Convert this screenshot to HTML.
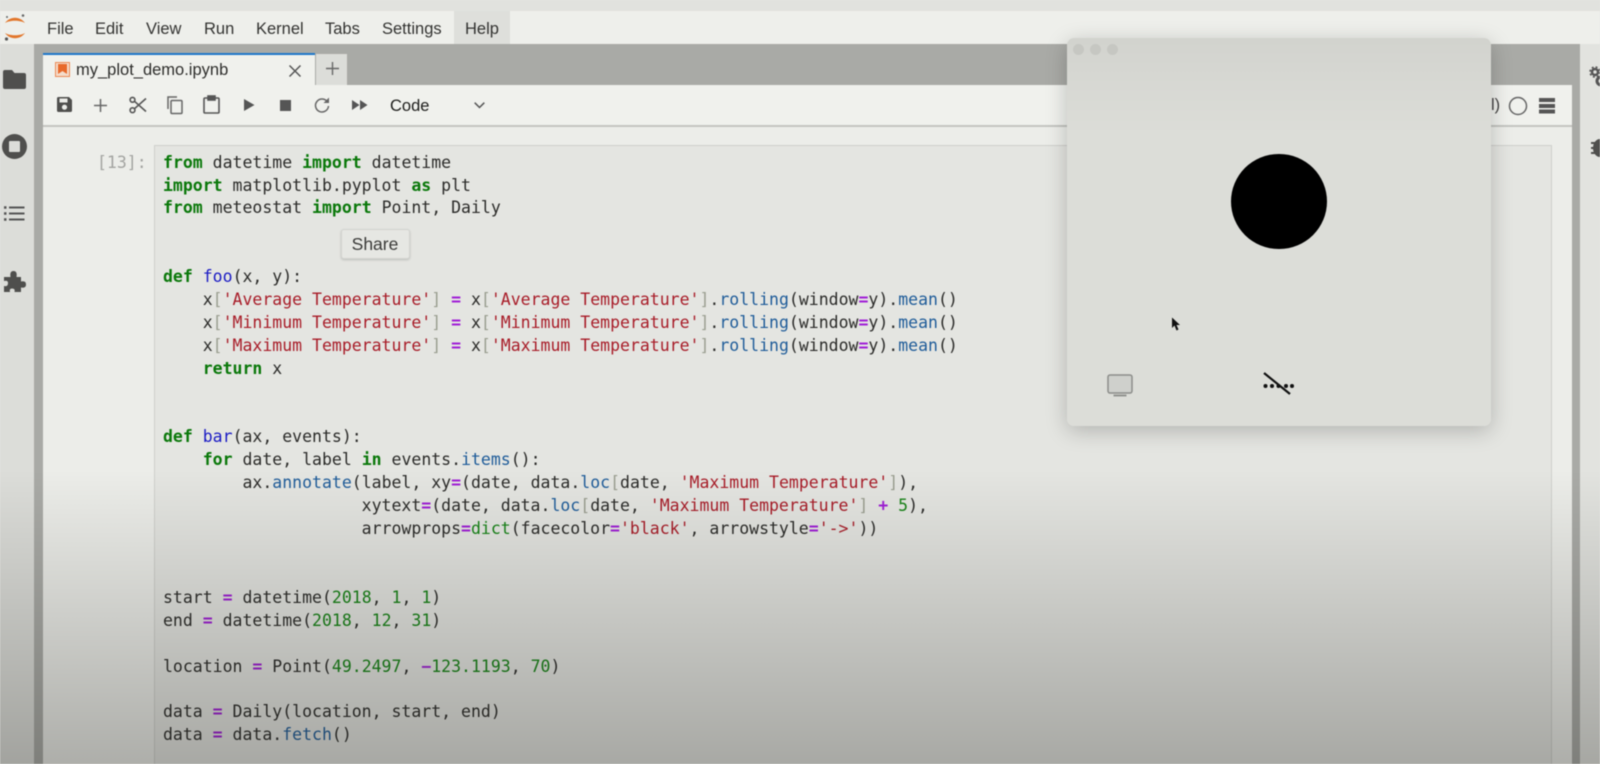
<!DOCTYPE html>
<html><head><meta charset="utf-8"><title>my_plot_demo.ipynb</title>
<style>
html,body{margin:0;padding:0;width:1600px;height:764px;overflow:hidden;background:#e6e7e3}
#root{position:absolute;left:0;top:0;width:1600px;height:764px;overflow:hidden;font-family:"Liberation Sans",sans-serif;filter:blur(.4px)}
.a{position:absolute}
.m{position:absolute;top:19px;font-size:16.5px;line-height:21px;color:#333331}
#code{position:absolute;left:163px;top:151.6px;margin:0;font:16.5px/22.9px "DejaVu Sans Mono",monospace;color:#2b2b29;white-space:pre}
.k{color:#0a780a;font-weight:bold}.o{color:#a01fd6;font-weight:bold}.s{color:#a81c28}.n{color:#178317}.f{color:#1f5c99}.d{color:#1a1ac4}.b{color:#9a9e90}.g{color:#178317}
svg{position:absolute;overflow:visible}
</style></head><body><div id="root">
<div class="a" style="left:0;top:0;width:1600px;height:11px;background:#e1e2de"></div>
<div class="a" style="left:0;top:11px;width:1600px;height:33px;background:#eeefeb"></div>
<div class="a" style="left:454px;top:11px;width:56px;height:33px;background:#dedfdb"></div>
<svg style="left:3px;top:13px" width="24" height="30" viewBox="0 0 24 30"><path d="M2 10C7 3 17 3 22 10C17 7 7 7 2 10Z" fill="#e2762b"/><path d="M2 20C7 27 17 27 22 20C17 23 7 23 2 20Z" fill="#e2762b"/><circle cx="20" cy="2.500" r="1.300" fill="#666"/><circle cx="4" cy="4" r="1" fill="#666"/><circle cx="3.500" cy="26" r="1.600" fill="#555"/></svg>
<span class="m" style="left:47px">File</span><span class="m" style="left:95px">Edit</span><span class="m" style="left:146px">View</span><span class="m" style="left:204px">Run</span><span class="m" style="left:256px">Kernel</span><span class="m" style="left:325px">Tabs</span><span class="m" style="left:382px">Settings</span><span class="m" style="left:465px">Help</span>

<div class="a" style="left:0;top:44px;width:34px;height:720px;background:#dcddd9"></div>
<div class="a" style="left:34px;top:44px;width:1546px;height:720px;background:#a9aaa6"></div>
<div class="a" style="left:1580px;top:44px;width:20px;height:720px;background:#e2e3df"></div>
<div class="a" style="left:43px;top:85px;width:1529px;height:679px;background:#ecede9"></div>

<div class="a" style="left:43px;top:53px;width:272px;height:32px;background:#f0f1ed;border-top:2px solid #1f77c9;box-sizing:border-box"></div>
<div class="a" style="left:316px;top:54px;width:31px;height:31px;background:#dcddd9"></div>
<div class="a" style="left:55px;top:62px;width:15px;height:15px;background:#f4dccb;box-sizing:border-box;border:1.5px solid #ec8a55"></div>
<svg style="left:58px;top:64px" width="9" height="10"><path d="M0 0H9V10L4.500 7L0 10Z" fill="#e8692a"/></svg>
<span class="a" style="left:76px;top:60px;font-size:16.5px;line-height:21px;color:#2e2e2c">my_plot_demo.ipynb</span>
<svg style="left:288px;top:64px" width="14" height="14"><path d="M1.5 1.5L12.5 12.5M12.5 1.5L1.5 12.5" stroke="#555" stroke-width="1.5"/></svg>
<svg style="left:326px;top:62px" width="13" height="13"><path d="M6.5 0V13M0 6.5H13" stroke="#666" stroke-width="1.4"/></svg>

<div class="a" style="left:43px;top:85px;width:1529px;height:40px;background:#f0f1ed;border-bottom:2px solid #c4c5c1"></div>
<svg style="left:56px;top:96px" width="17" height="17" viewBox="0 0 17 17"><path d="M1 2.500Q1 1 2.500 1H13L16 4V14.500Q16 16 14.500 16H2.500Q1 16 1 14.500Z" fill="#4f4f4d"/><rect x="3.500" y="2.500" width="8" height="4" fill="#ecede9"/><circle cx="8.500" cy="11.200" r="2.600" fill="#ecede9"/></svg>
<svg style="left:94px;top:99px" width="13" height="13"><path d="M6.500 0V13M0 6.500H13" stroke="#666" stroke-width="1.500"/></svg>
<svg style="left:129px;top:96px" width="18" height="18" viewBox="0 0 18 18" fill="none" stroke="#555" stroke-width="1.600"><circle cx="3.500" cy="3.800" r="2.400"/><circle cx="3.500" cy="14.200" r="2.400"/><path d="M5.500 5.300L17 15.500M5.500 12.700L17 2.500"/></svg>
<svg style="left:166px;top:96px" width="17" height="18" viewBox="0 0 17 18" fill="none" stroke="#666" stroke-width="1.500"><path d="M11 1H2V13"/><rect x="5" y="4.500" width="11" height="13" rx="1"/></svg>
<svg style="left:203px;top:95px" width="17" height="19" viewBox="0 0 17 19" fill="none" stroke="#555" stroke-width="1.600"><rect x="1" y="3" width="15" height="15" rx="1"/><rect x="5" y="1" width="7" height="4" fill="#555"/></svg>
<svg style="left:244px;top:99px" width="11" height="12"><path d="M0 0L10.500 6L0 12Z" fill="#555"/></svg>
<div class="a" style="left:280px;top:100px;width:10.500px;height:10.500px;background:#555"></div>
<svg style="left:314px;top:97px" width="16" height="16" viewBox="0 0 16 16" fill="none"><path d="M13.500 5A6.500 6.500 0 1 0 14.500 9" stroke="#666" stroke-width="1.500"/><path d="M15 0.500V6H9.500Z" fill="#666"/></svg>
<svg style="left:352px;top:100px" width="16" height="10"><path d="M0 0L7.500 5L0 10ZM8 0L15.500 5L8 10Z" fill="#555"/></svg>
<span class="a" style="left:390px;top:96px;font-size:16.500px;line-height:21px;color:#1e1e1c">Code</span>
<svg style="left:474px;top:102px" width="11" height="7"><path d="M.7 .7L5.500 5.500L10.300 .7" fill="none" stroke="#555" stroke-width="1.500"/></svg>
<span class="a" style="left:1491px;top:95px;font-size:16.500px;line-height:21px;color:#444">l)</span>
<svg style="left:1508px;top:96px" width="20" height="20"><circle cx="10" cy="10" r="8.500" fill="none" stroke="#666" stroke-width="1.500"/></svg>
<div class="a" style="left:1539px;top:98px;width:16px;height:3.500px;background:#555;box-shadow:0 6px 0 #555,0 11.500px 0 #555"></div>

<div class="a" style="left:154px;top:145px;width:1398px;height:640px;background:#e4e5e1;border:1px solid #cfd0cc;box-sizing:border-box"></div>
<span class="a" style="left:97px;top:151.6px;font:16.500px/22.900px 'DejaVu Sans Mono',monospace;color:#a3a4a1">[13]:</span>

<pre id="code"><span class="k">from</span> datetime <span class="k">import</span> datetime
<span class="k">import</span> matplotlib.pyplot <span class="k">as</span> plt
<span class="k">from</span> meteostat <span class="k">import</span> Point, Daily


<span class="k">def</span> <span class="d">foo</span>(x, y):
    x<span class="b">[</span><span class="s">'Average Temperature'</span><span class="b">]</span> <span class="o">=</span> x<span class="b">[</span><span class="s">'Average Temperature'</span><span class="b">]</span>.<span class="f">rolling</span>(window<span class="o">=</span>y).<span class="f">mean</span>()
    x<span class="b">[</span><span class="s">'Minimum Temperature'</span><span class="b">]</span> <span class="o">=</span> x<span class="b">[</span><span class="s">'Minimum Temperature'</span><span class="b">]</span>.<span class="f">rolling</span>(window<span class="o">=</span>y).<span class="f">mean</span>()
    x<span class="b">[</span><span class="s">'Maximum Temperature'</span><span class="b">]</span> <span class="o">=</span> x<span class="b">[</span><span class="s">'Maximum Temperature'</span><span class="b">]</span>.<span class="f">rolling</span>(window<span class="o">=</span>y).<span class="f">mean</span>()
    <span class="k">return</span> x


<span class="k">def</span> <span class="d">bar</span>(ax, events):
    <span class="k">for</span> date, label <span class="k">in</span> events.<span class="f">items</span>():
        ax.<span class="f">annotate</span>(label, xy<span class="o">=</span>(date, data.<span class="f">loc</span><span class="b">[</span>date, <span class="s">'Maximum Temperature'</span><span class="b">]</span>),
                    xytext<span class="o">=</span>(date, data.<span class="f">loc</span><span class="b">[</span>date, <span class="s">'Maximum Temperature'</span><span class="b">]</span> <span class="o">+</span> <span class="n">5</span>),
                    arrowprops<span class="o">=</span><span class="g">dict</span>(facecolor<span class="o">=</span><span class="s">'black'</span>, arrowstyle<span class="o">=</span><span class="s">'-&gt;'</span>))


start <span class="o">=</span> datetime(<span class="n">2018</span>, <span class="n">1</span>, <span class="n">1</span>)
end <span class="o">=</span> datetime(<span class="n">2018</span>, <span class="n">12</span>, <span class="n">31</span>)

location <span class="o">=</span> Point(<span class="n">49.2497</span>, <span class="o">−</span><span class="n">123.1193</span>, <span class="n">70</span>)

data <span class="o">=</span> Daily(location, start, end)
data <span class="o">=</span> data.<span class="f">fetch</span>()</pre>

<div class="a" style="left:341px;top:229px;width:69px;height:30px;box-sizing:border-box;background:#e6e7e3;border:1px solid #d2d3cf;border-radius:3px;box-shadow:0 1px 2px rgba(0,0,0,.18);font-size:17.500px;line-height:28px;text-align:center;color:#3a3a38;text-indent:-1px">Share</div>

<svg style="left:3px;top:70px" width="23" height="19" viewBox="0 0 23 19"><path d="M0 2Q0 0 2 0H9L11.500 3H21Q23 3 23 5V17Q23 19 21 19H2Q0 19 0 17Z" fill="#4f4f4d"/></svg>
<svg style="left:2px;top:134px" width="25" height="25"><circle cx="12.500" cy="12.500" r="12.500" fill="#4f4f4d"/><rect x="7" y="7" width="11" height="11" rx="1" fill="#dcddd9"/></svg>
<svg style="left:4px;top:205px" width="21" height="17" fill="none" stroke="#555" stroke-width="2"><path d="M5 2.500H20.500M5 8.500H20.500M5 14.500H20.500"/><path d="M0 2.500H2.500M0 8.500H2.500M0 14.500H2.500" stroke-width="2.500"/></svg>
<svg style="left:3px;top:270px" width="23" height="23" viewBox="0 0 23 23"><path d="M1 7H7.500Q6.500 1 10.500 1Q14.500 1 13.500 7H18V11.500Q23 10.500 23 14.500Q23 18.500 18 17.500V22H11.500Q12.500 18.500 9 18.500Q6 18.500 7 22H1V16Q5 17 5 13Q5 10 1 11Z" fill="#4f4f4d"/></svg>
<svg style="left:1590px;top:66px" width="14" height="24" fill="none" stroke="#555"><circle cx="5" cy="6" r="3" stroke-width="2.500"/><circle cx="5" cy="6" r="5" stroke-width="1.500" stroke-dasharray="2 2"/><circle cx="11" cy="15" r="4" stroke-width="3"/></svg>
<svg style="left:1591px;top:136px" width="12" height="24"><ellipse cx="9" cy="12" rx="7" ry="9" fill="#4f4f4d"/><path d="M0 7H4M0 12H4M0 17H4" stroke="#4f4f4d" stroke-width="2"/></svg>

<div class="a" style="left:0;top:470px;width:1600px;height:294px;background:linear-gradient(to bottom,rgba(30,30,25,0),rgba(30,30,25,.3));pointer-events:none"></div>

<div class="a" style="left:1067px;top:38px;width:424px;height:388px;border-radius:7px;background:linear-gradient(to bottom,#d2d3ce 0,#d7d8d3 45px,#dcddd8 95px,#dcddd8 100%);box-shadow:0 5px 22px rgba(0,0,0,.22)"></div>
<div class="a" style="left:1073px;top:44px;width:11px;height:11px;border-radius:50%;background:#c6c7c2;box-shadow:17px 0 0 #c6c7c2,34px 0 0 #c6c7c2"></div>
<div class="a" style="left:1231px;top:154px;width:95.500px;height:95px;border-radius:50%;background:#000"></div>
<svg style="left:1171px;top:317px" width="10" height="15"><path d="M1 .5V11L3.500 8.500L5.500 13.500L7.500 12.500L5.500 8H9Z" fill="#111"/></svg>
<svg style="left:1107px;top:374px" width="26" height="23" fill="none"><rect x="1" y="1" width="24" height="18" rx="2" fill="#cfd0cc" stroke="#8c8d8a" stroke-width="1.500"/><path d="M6.500 21.500H19.500" stroke="#8c8d8a" stroke-width="1.800"/></svg>
<svg style="left:1263px;top:372px" width="32" height="24"><path d="M1 1L27 22" stroke="#111" stroke-width="2.200"/><circle cx="2.500" cy="14" r="2" fill="#111"/><circle cx="9" cy="14" r="2" fill="#111"/><circle cx="15.500" cy="14" r="2" fill="#111"/><circle cx="23" cy="14" r="2" fill="#111"/><circle cx="29" cy="14" r="2" fill="#111"/></svg>
</div></body></html>
